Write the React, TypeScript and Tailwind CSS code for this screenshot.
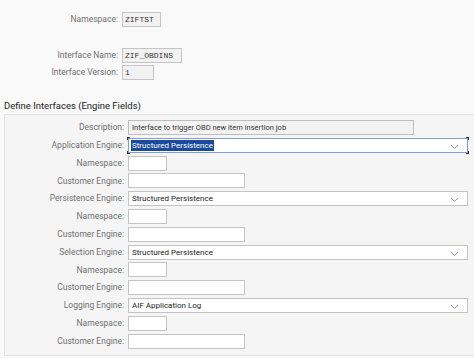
import React from 'react';

const sans = { fontFamily: 'Roboto, "Open Sans", "Liberation Sans", sans-serif' };

const Chevron = () => (
  <svg width="9" height="6" viewBox="0 0 9 6" className="absolute right-[8px] top-[5px]">
    <path d="M1 1 L4.5 4.5 L8 1" fill="none" stroke="#8a9bb0" strokeWidth="1" />
  </svg>
);

type Row = { label: string; kind: 'text' | 'select' | 'ns' | 'cust' | 'focus'; value?: string };

const rows: Row[] = [
  { label: 'Description:', kind: 'text', value: 'Interface to trigger OBD new item insertion job' },
  { label: 'Application Engine:', kind: 'focus', value: 'Structured Persistence' },
  { label: 'Namespace:', kind: 'ns' },
  { label: 'Customer Engine:', kind: 'cust' },
  { label: 'Persistence Engine:', kind: 'select', value: 'Structured Persistence' },
  { label: 'Namespace:', kind: 'ns' },
  { label: 'Customer Engine:', kind: 'cust' },
  { label: 'Selection Engine:', kind: 'select', value: 'Structured Persistence' },
  { label: 'Namespace:', kind: 'ns' },
  { label: 'Customer Engine:', kind: 'cust' },
  { label: 'Logging Engine:', kind: 'select', value: 'AIF Application Log' },
  { label: 'Namespace:', kind: 'ns' },
  { label: 'Customer Engine:', kind: 'cust' },
];

const Field = ({ row }: { row: Row }) => {
  if (row.kind === 'text')
    return (
      <div className="w-[286px] h-[15px] border border-[#bdbdbd] bg-[#f2f2f2] px-[3px] text-[7.5px] leading-[13px] text-[#333] whitespace-nowrap">
        {row.value}
      </div>
    );
  if (row.kind === 'ns') return <div className="w-[39px] h-[15px] border border-[#c4c4c4] bg-white" />;
  if (row.kind === 'cust') return <div className="w-[117px] h-[15px] border border-[#c4c4c4] bg-white" />;
  if (row.kind === 'focus')
    return (
      <div className="relative w-[340px] h-[15px] border border-[#7f9fc9] bg-white pl-[2px] text-[8px] leading-[13px] whitespace-nowrap">
        <span className="bg-[#1b4a9c] text-white px-[1px] py-[1px]">{row.value}</span>
        <Chevron />
        <div className="absolute -left-[2px] -top-[2px] w-[3px] h-[3px] border-l border-t border-[#333]" />
        <div className="absolute -left-[2px] -bottom-[2px] w-[3px] h-[3px] border-l border-b border-[#333]" />
        <div className="absolute -right-[2px] -top-[2px] w-[3px] h-[3px] border-r border-t border-[#333]" />
        <div className="absolute -right-[2px] -bottom-[2px] w-[3px] h-[3px] border-r border-b border-[#333]" />
      </div>
    );
  return (
    <div className="relative w-[340px] h-[15px] border border-[#c4c4c4] bg-white px-[3px] text-[8px] leading-[13px] text-[#222] whitespace-nowrap">
      {row.value}
      <Chevron />
    </div>
  );
};

const mono = "h-[15px] border border-[#c4c4c4] bg-[#f2f2f2] px-[2px] text-[8px] leading-[13px] text-[#333] font-['Liberation_Mono',monospace]";

const App = () => {
  return (
    <div className="w-[474px] h-[358px] bg-[#f9f9f9] overflow-hidden text-[#707070]" style={sans}>
      <div className="pt-[12px] flex flex-col gap-[2px]">
        <div className="flex items-center h-[15px]">
          <div className="w-[122px] text-right text-[8.5px] pr-[4px]">Namespace:</div>
          <div className={`w-[39px] ${mono}`}>ZIFTST</div>
        </div>
        <div className="h-[17px]" />
        <div className="flex items-center h-[15px]">
          <div className="w-[122px] text-right text-[8.5px] pr-[4px]">Interface Name:</div>
          <div className={`w-[60px] ${mono}`}>ZIF_OBDINS</div>
        </div>
        <div className="flex items-center h-[15px]">
          <div className="w-[122px] text-right text-[8.5px] pr-[4px]">Interface Version:</div>
          <div className={`w-[32px] ${mono}`}>1</div>
        </div>
      </div>
      <div className="mt-[20px] pl-[4px] text-[9.5px] leading-[12px] text-[#222]">Define Interfaces (Engine Fields)</div>
      <div className="mt-[2px] ml-[4px] h-[242px] border-l border-t border-b border-[#e2e2e2] bg-[#f5f5f5] pt-[5px] flex flex-col gap-[2.8px]">
        {rows.map((row, i) => (
          <div key={i} className="flex items-center h-[15px]">
            <div className="w-[123px] text-right text-[8.5px] pr-[4px] whitespace-nowrap">{row.label}</div>
            <Field row={row} />
          </div>
        ))}
      </div>
    </div>
  );
};

export default App;
